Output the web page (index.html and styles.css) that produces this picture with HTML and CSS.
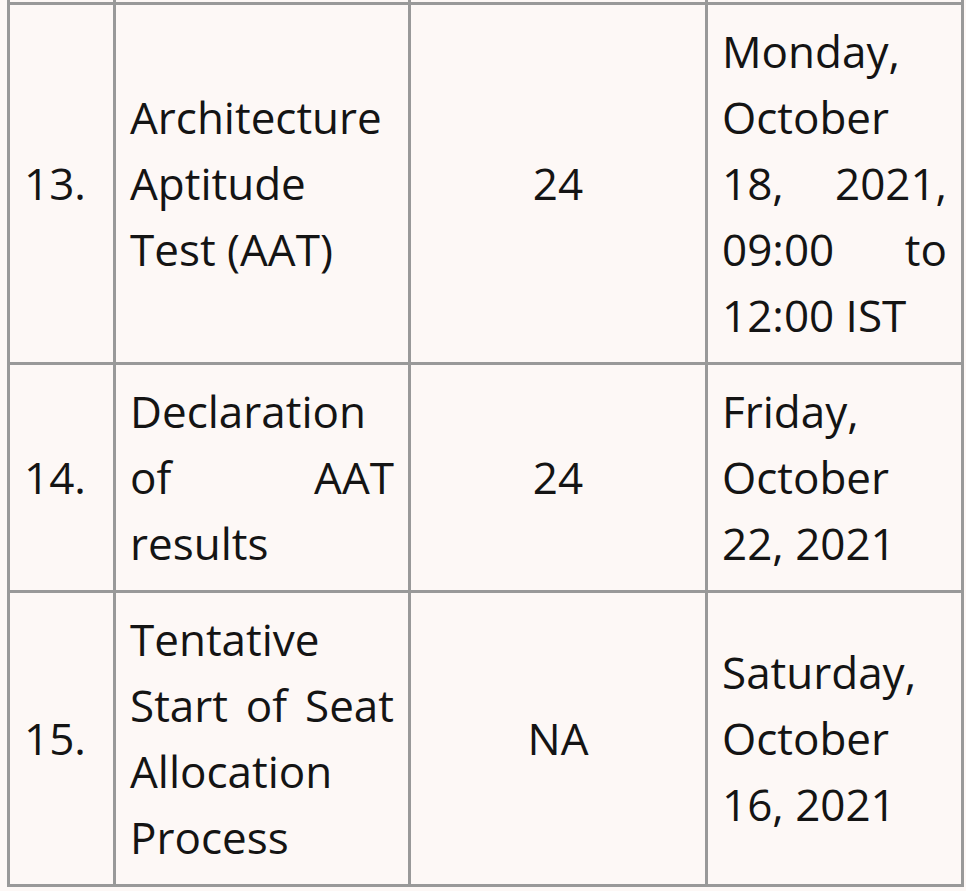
FILE: index.html
```html
<!DOCTYPE html>
<html lang="en">
<head>
<meta charset="utf-8">
<title>Important dates</title>
<link rel="stylesheet" href="styles.css">
</head>
<body>
<div class="viewport">
  <table class="dates">
    <colgroup>
      <col class="c-no">
      <col class="c-event">
      <col class="c-hours">
      <col class="c-date">
    </colgroup>
    <tbody>
      <tr class="cut">
        <td></td><td></td><td></td><td></td>
      </tr>
      <tr>
        <td class="no">13.</td>
        <td class="event">Architecture Aptitude Test (AAT)</td>
        <td class="hours">24</td>
        <td class="date">Monday, October 18, 2021, 09:00 to 12:00 IST</td>
      </tr>
      <tr>
        <td class="no">14.</td>
        <td class="event">Declaration of AAT results</td>
        <td class="hours">24</td>
        <td class="date">Friday, October 22, 2021</td>
      </tr>
      <tr>
        <td class="no">15.</td>
        <td class="event">Tentative Start of Seat Allocation Process</td>
        <td class="hours">NA</td>
        <td class="date">Saturday, October 16, 2021</td>
      </tr>
    </tbody>
  </table>
</div>
</body>
</html>
```
FILE: styles.css
```css
html, body {
  margin: 0;
  padding: 0;
  background: #fdf8f6;
}

body {
  font-family: "Open Sans", "Noto Sans", sans-serif;
  color: #141414;
}

.viewport {
  padding: 0 2px 0 7px;
  height: 891px;
  overflow: hidden;
}

.dates {
  border-collapse: collapse;
  width: 957px;
  table-layout: fixed;
  font-size: 44px;
  line-height: 66px;
}

.c-no { width: 106px; }
.c-event { width: 295px; }
.c-hours { width: 297px; }
.c-date { width: 256px; }

.dates td {
  border: 3px solid #999;
  padding: 13px 14px 14px;
  vertical-align: middle;
}

.dates .cut td {
  border-top: 0;
  padding: 0;
  height: 2px;
  line-height: 0;
}

.no { text-align: left; }
.event { text-align: justify; }
.hours { text-align: center; }
.date { text-align: justify; }
```
